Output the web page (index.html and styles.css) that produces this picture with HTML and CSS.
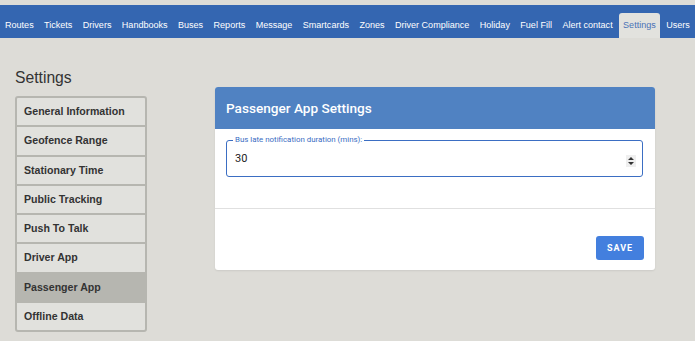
FILE: index.html
```html
<!DOCTYPE html>
<html lang="en">
<head>
    <meta charset="UTF-8">
    <meta name="viewport" content="width=device-width, initial-scale=1.0">
    <title>Settings - Passenger App</title>
    <link rel="stylesheet" href="styles.css">
</head>
<body>

<!-- Top navigation -->
<nav class="topnav">
    <ul>
        <li><a href="#">Routes</a></li>
        <li><a href="#">Tickets</a></li>
        <li><a href="#">Drivers</a></li>
        <li><a href="#">Handbooks</a></li>
        <li><a href="#">Buses</a></li>
        <li><a href="#">Reports</a></li>
        <li><a href="#">Message</a></li>
        <li><a href="#">Smartcards</a></li>
        <li><a href="#">Zones</a></li>
        <li><a href="#">Driver Compliance</a></li>
        <li><a href="#">Holiday</a></li>
        <li><a href="#">Fuel Fill</a></li>
        <li><a href="#">Alert contact</a></li>
        <li class="active"><a href="#">Settings</a></li>
        <li><a href="#">Users</a></li>
    </ul>
</nav>

<div class="page">
    <!-- Settings menu -->
    <aside class="sidebar">
        <h2>Settings</h2>
        <ul class="menu">
            <li><a href="#">General Information</a></li>
            <li><a href="#">Geofence Range</a></li>
            <li><a href="#">Stationary Time</a></li>
            <li><a href="#">Public Tracking</a></li>
            <li><a href="#">Push To Talk</a></li>
            <li><a href="#">Driver App</a></li>
            <li class="selected"><a href="#">Passenger App</a></li>
            <li><a href="#">Offline Data</a></li>
        </ul>
    </aside>

    <!-- Passenger app form -->
    <main class="content">
        <div class="card">
            <div class="card-header">Passenger App Settings</div>
            <div class="card-body">
                <fieldset class="field">
                    <legend>Bus late notification duration (mins):</legend>
                    <input type="text" id="lateDuration" value="30">
                    <span class="spinner">
                        <svg width="6" height="8" viewBox="0 0 6 8">
                            <path d="M0 3 L3 0 L6 3 Z M0 5 L3 8 L6 5 Z" fill="#333"/>
                        </svg>
                    </span>
                </fieldset>
            </div>
            <div class="card-footer">
                <button id="saveBtn">Save</button>
            </div>
        </div>
    </main>
</div>

</body>
</html>
```

FILE: styles.css
```css
body {
    margin: 0;
    padding-top: 5px;
    background-color: #dddcd7;
    font-family: "Liberation Sans", Arial, sans-serif;
}
.topnav {
    background-color: #3466b1;
    height: 33px;
}
.topnav ul {
    list-style: none;
    margin: 0;
    padding: 8px 0 0 1px;
    display: flex;
    white-space: nowrap;
}
.topnav li {
    margin-right: 2.4px;
    border-radius: 3px 3px 0 0;
}
.topnav a {
    display: block;
    padding: 0 4px;
    height: 25px;
    line-height: 25px;
    font-size: 9.05px;
    color: #fff;
    text-decoration: none;
}
.topnav li.active {
    background-color: #e2e2de;
}
.topnav li.active a {
    color: #4a72b6;
}

.page {
    display: flex;
    padding-left: 15px;
}
.sidebar {
    width: 132px;
}
.sidebar h2 {
    margin: 31px 0 9px;
    font-size: 15.7px;
    font-weight: normal;
    color: #333;
    line-height: 18px;
}
.menu {
    list-style: none;
    margin: 0;
    padding: 0;
    border: 2px solid #b6b6b0;
    border-radius: 3px;
    background-color: #e1e1dd;
}
.menu li {
    border-bottom: 2px solid #b6b6b0;
}
.menu li:last-child {
    border-bottom: none;
}
.menu a {
    display: block;
    height: 27.3px;
    line-height: 26px;
    padding-left: 7px;
    font-size: 10.6px;
    font-weight: bold;
    color: #333;
    text-decoration: none;
}
.menu li.selected {
    background-color: #b6b6b0;
}

.content {
    margin-left: 68px;
    margin-top: 49px;
}
.card {
    width: 440px;
    background-color: #fff;
    border-radius: 3px;
    box-shadow: 0 1px 2px rgba(0, 0, 0, 0.08);
    font-family: Roboto, "Liberation Sans", sans-serif;
}
.card-header {
    background-color: #5082c2;
    color: #fff;
    height: 42px;
    line-height: 42px;
    padding-left: 11px;
    font-size: 13.6px;
    font-weight: 500;
    border-radius: 3px 3px 0 0;
}
.card-body {
    padding: 7px 12px 31px 11px;
    border-bottom: 1px solid #e0e0e0;
}
.field {
    position: relative;
    margin: 0;
    padding: 0 8px;
    border: 1px solid #3b6ec3;
    border-radius: 3px;
    height: 39px;
}
.field legend {
    margin-left: -2px;
    padding: 0 2px;
    font-size: 7.9px;
    line-height: 8px;
    color: #3b6ec3;
}
.field input {
    border: none;
    outline: none;
    padding: 0;
    margin-top: 7px;
    width: 360px;
    font-family: Roboto, "Liberation Sans", sans-serif;
    font-size: 11px;
    line-height: 16px;
    color: #222;
    background: transparent;
}
.spinner {
    position: absolute;
    right: 6px;
    top: 11px;
    width: 10px;
    height: 12px;
    background-color: #efefef;
    display: flex;
    align-items: center;
    justify-content: center;
}
.card-footer {
    display: flex;
    justify-content: flex-end;
    padding: 27px 11px 10px 0;
}
.card-footer button {
    width: 48px;
    height: 24px;
    border: none;
    border-radius: 3px;
    background-color: #437fde;
    color: #fff;
    font-family: Roboto, "Liberation Sans", sans-serif;
    font-size: 9px;
    font-weight: bold;
    letter-spacing: 1px;
    text-transform: uppercase;
    cursor: pointer;
}
```
